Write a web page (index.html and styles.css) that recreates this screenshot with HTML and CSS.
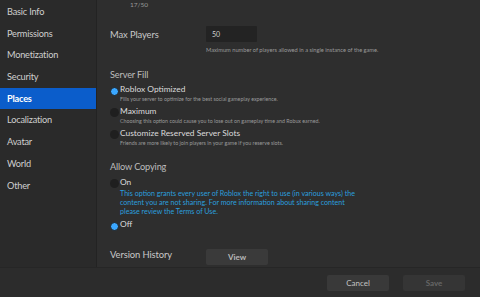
FILE: index.html
```html
<!DOCTYPE html>
<html lang="en">
<head>
  <meta charset="UTF-8">
  <title>Game Settings - Places</title>
  <link rel="stylesheet" href="styles.css">
</head>
<body>

  <div class="app">
    <div class="main">
      <div class="sidebar">
        <div class="nav-item">Basic Info</div>
        <div class="nav-item">Permissions</div>
        <div class="nav-item">Monetization</div>
        <div class="nav-item">Security</div>
        <div class="nav-item active">Places</div>
        <div class="nav-item">Localization</div>
        <div class="nav-item">Avatar</div>
        <div class="nav-item">World</div>
        <div class="nav-item">Other</div>
      </div>

      <div class="content">
        <div class="counter">17/50</div>

        <div class="field-row">
          <div class="field-label">Max Players</div>
          <div class="text-input">50</div>
        </div>
        <div class="hint">Maximum number of players allowed in a single instance of the game.</div>

        <div class="section-title server-fill">Server Fill</div>
        <div class="option">
          <span class="radio checked"></span>
          <div class="option-body">
            <div class="option-label">Roblox Optimized</div>
            <div class="option-desc">Fills your server to optimize for the best social gameplay experience.</div>
          </div>
        </div>
        <div class="option">
          <span class="radio"></span>
          <div class="option-body">
            <div class="option-label">Maximum</div>
            <div class="option-desc">Choosing this option could cause you to lose out on gameplay time and Robux earned.</div>
          </div>
        </div>
        <div class="option">
          <span class="radio"></span>
          <div class="option-body">
            <div class="option-label">Customize Reserved Server Slots</div>
            <div class="option-desc">Friends are more likely to join players in your game if you reserve slots.</div>
          </div>
        </div>

        <div class="section-title allow-copying">Allow Copying</div>
        <div class="option">
          <span class="radio"></span>
          <div class="option-body">
            <div class="option-label">On</div>
            <div class="option-warning">This option grants every user of Roblox the right to use (in various ways) the<br>content you are not sharing. For more information about sharing content<br>please review the Terms of Use.</div>
          </div>
        </div>
        <div class="option">
          <span class="radio checked"></span>
          <div class="option-body">
            <div class="option-label">Off</div>
          </div>
        </div>

        <div class="field-row version-row">
          <div class="field-label">Version History</div>
          <button class="btn view-btn">View</button>
        </div>
      </div>
    </div>

    <div class="footer">
      <button class="btn footer-btn">Cancel</button>
      <button class="btn footer-btn disabled">Save</button>
    </div>
  </div>

</body>
</html>
```

FILE: styles.css
```css
body {
  font-family: Lato, "Open Sans", sans-serif;
  background: #2e2e2e;
  color: #cccccc;
  margin: 0;
  padding: 0;
}

.app {
  width: 480px;
  height: 297px;
  display: flex;
  flex-direction: column;
  overflow: hidden;
}

.main {
  display: flex;
  height: 267px;
}

/* left nav */
.sidebar {
  width: 96px;
  flex-shrink: 0;
  background: #2a2a2a;
  border-right: 1px solid #232323;
  padding-top: 1px;
}

.nav-item {
  height: 21.7px;
  line-height: 21.7px;
  padding-left: 7px;
  font-size: 9.2px;
  letter-spacing: -0.2px;
  color: #cfcfcf;
}

.nav-item.active {
  background: #0b5dcb;
  color: #ffffff;
  font-weight: bold;
}

/* settings column */
.content {
  flex: 1;
  padding-left: 13px;
  background: #2e2e2e;
}

.counter {
  font-size: 6.5px;
  line-height: 10px;
  color: #9a9a9a;
  padding-left: 20px;
}

.field-row {
  display: flex;
  align-items: center;
  height: 16px;
  margin-top: 16px;
}

.field-label {
  width: 96px;
  font-size: 9.4px;
  letter-spacing: -0.1px;
  color: #c8c8c8;
}

.text-input {
  width: 45px;
  height: 16px;
  line-height: 16px;
  padding-left: 6px;
  background: #232323;
  border-radius: 1px;
  font-size: 7px;
  color: #cfcfcf;
  box-sizing: content-box;
}

.hint {
  margin-top: 4px;
  margin-left: 96px;
  font-size: 5.7px;
  line-height: 8px;
  color: #9a9a9a;
}

.section-title {
  font-size: 9.2px;
  letter-spacing: -0.15px;
  line-height: 12px;
  color: #bdbdbd;
}

.server-fill { margin-top: 15px; margin-bottom: 3px; }
.allow-copying { margin-top: 14px; margin-bottom: 4px; }

.option {
  display: flex;
  margin-bottom: 3px;
}

.radio {
  width: 9px;
  height: 9px;
  margin-top: 2px;
  margin-right: 1px;
  border-radius: 50%;
  background: #1f1f1f;
  box-sizing: border-box;
  flex-shrink: 0;
}

.radio.checked {
  background: #3aa7ff;
  border: 1.5px solid #1f1f1f;
  margin-top: 3px;
}

.option-label {
  font-size: 8.4px;
  line-height: 11px;
  color: #dcdcdc;
}

.option-desc {
  font-size: 5.3px;
  line-height: 8px;
  color: #9a9a9a;
}

.option-warning {
  margin-top: 1px;
  font-size: 7.1px;
  line-height: 9px;
  color: #2b9fde;
}

.btn {
  font-family: Lato, "Open Sans", sans-serif;
  border: none;
  border-radius: 2px;
  padding: 0;
  cursor: pointer;
}

.version-row {
  margin-top: 18px;
}

.version-row .field-label {
  margin-top: -5px;
}

.view-btn {
  width: 62px;
  height: 16px;
  background: #3a3a3a;
  color: #b9b9b9;
  font-size: 8px;
  font-weight: bold;
}

/* bottom bar */
.footer {
  height: 30px;
  background: #2c2c2c;
  border-top: 1px solid #262626;
  box-sizing: border-box;
  display: flex;
  justify-content: flex-end;
  align-items: center;
  gap: 14px;
  padding-right: 15px;
}

.footer-btn {
  width: 62px;
  height: 16px;
  margin-top: 1px;
  background: #393939;
  color: #c3c3c3;
  font-size: 8px;
}

.footer-btn.disabled {
  background: #353535;
  color: #666666;
  font-weight: bold;
}
```
